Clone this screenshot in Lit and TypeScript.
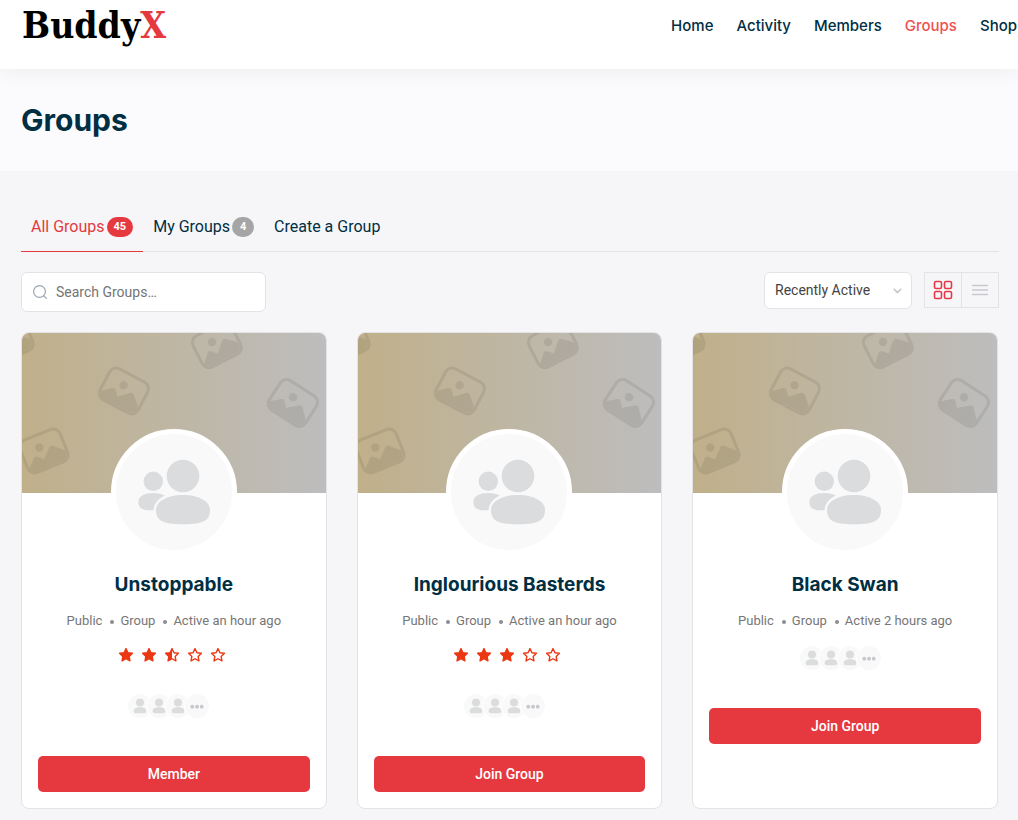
import { LitElement, html, css, svg, nothing } from "lit";
import { customElement, property } from "lit/decorators.js";

type Group = {
  name: string;
  active: string;
  rating: number | null;
  action: string;
};

const groups: Group[] = [
  { name: "Unstoppable", active: "Active an hour ago", rating: 2.5, action: "Member" },
  { name: "Inglourious Basterds", active: "Active an hour ago", rating: 3, action: "Join Group" },
  { name: "Black Swan", active: "Active 2 hours ago", rating: null, action: "Join Group" },
];

const navItems = ["Home", "Activity", "Members", "Groups", "Shop"];

const picture = (x: number, y: number, angle: number) => svg`
  <g transform="translate(${x} ${y}) rotate(${angle})">
    <rect x="-21.5" y="-17.5" width="43" height="35" rx="7.5" fill="none" stroke="currentColor" stroke-width="3"></rect>
    <circle cx="-3" cy="-5" r="4.2" fill="currentColor"></circle>
    <path d="M-20 11 L-12 3 Q-10 1 -8 3 L-3 8 L6 -1 Q8.500 -3.500 11 -1 L20 7.500 V9.500 Q20 16 13.500 16 H-13.500 Q-20 16 -20 11Z" fill="currentColor"></path>
  </g>`;

const starOutline =
  "M8 1.600 L9.950 5.700 L14.400 6.300 L11.150 9.400 L11.950 13.900 L8 11.750 L4.050 13.900 L4.850 9.400 L1.600 6.300 L6.050 5.700Z";

@customElement("star-rating")
class StarRating extends LitElement {
  @property({ type: Number }) value = 0;

  static styles = css`
    :host { display: flex; justify-content: center; gap: 7px; padding-right: 4px; color: #eb3812; }
    svg { display: block; width: 16px; height: 16px; }
  `;

  render() {
    return [0, 1, 2, 3, 4].map((i) => {
      const part = this.value - i;
      return html`<svg viewBox="0 0 16 16" aria-hidden="true">
        <path d=${starOutline} fill=${part >= 1 ? "currentColor" : "none"} stroke="currentColor" stroke-width="1.4" stroke-linejoin="round"></path>
        ${part > 0 && part < 1
          ? svg`<path d="M8 1.600 V11.750 L4.050 13.900 L4.850 9.400 L1.600 6.300 L6.050 5.700Z" fill="currentColor"></path>`
          : nothing}
      </svg>`;
    });
  }
}

@customElement("group-card")
class GroupCard extends LitElement {
  @property({ attribute: false }) group!: Group;

  static styles = css`
    :host {
      display: block;
      box-sizing: border-box;
      background: #fff;
      border: 1px solid #e3e3e5;
      border-radius: 8px;
      overflow: hidden;
      text-align: center;
    }
    .cover {
      display: block;
      width: 100%;
      height: 160px;
      background: linear-gradient(90deg, #c0b08a, #bdbdbe);
      color: #000;
    }
    .avatar {
      position: relative;
      display: block;
      width: 116px;
      height: 116px;
      margin: -64px auto 0;
      border: 5px solid #fff;
      border-radius: 50%;
      background: #f9f9f9;
    }
    .body { padding: 17px 16px 16px; }
    .name {
      margin: 0;
      font: 700 19px/26px Inter, sans-serif;
      color: #002e43;
    }
    .name a { color: inherit; text-decoration: none; }
    .meta {
      display: flex;
      justify-content: center;
      align-items: center;
      margin: 13px 0 0;
      font-size: 13px;
      line-height: 20px;
      color: #767676;
    }
    .dot {
      width: 4px;
      height: 4px;
      margin: 2px 6px 0 8px;
      border-radius: 50%;
      background: #8c8c91;
    }
    star-rating { margin: 16px 0 14px; }
    .people {
      display: flex;
      justify-content: center;
      margin-top: 15px;
      padding-right: 10px;
    }
    .rated .people { margin-top: 31px; }
    .person {
      width: 24px;
      height: 24px;
      border-radius: 50%;
      background: #f9f9f9;
      box-shadow: 0 0 0 1px #fff;
    }
    .person + .person { margin-left: -5px; }
    .action {
      display: block;
      width: 100%;
      height: 36px;
      margin-top: 38px;
      padding: 0;
      border: 0;
      border-radius: 5px;
      background: #e5393f;
      color: #fff;
      font: 500 14px/20px Roboto, sans-serif;
    }
  `;

  render() {
    const g = this.group;
    return html`
      <svg class="cover" viewBox="0 0 304 160" preserveAspectRatio="xMidYMid slice" aria-hidden="true">
        <g opacity="0.08">
          ${picture(-13, 7, -22)} ${picture(102, 58, 28)} ${picture(195, 12, -27)}
          ${picture(271, 70, 33)} ${picture(22, 118, -22)}
        </g>
      </svg>
      <svg class="avatar" viewBox="0 0 116 116" aria-hidden="true">
        <g fill="#dbdcde">
          <circle cx="37.300" cy="47.300" r="9.700"></circle>
          <path d="M22.300 68 C22.300 62 29 59 37 59 C42 59 46 60 49 61.800 C42 64.500 38 69.500 37.500 76.300 H33 C26 76.300 22.300 73.500 22.300 68Z"></path>
          <circle cx="67" cy="42" r="16.300"></circle>
          <path d="M40 76 C40 67 52 61 67 61 C82 61 94 67 94 76 C94 86 88 90.300 67 90.300 C46 90.300 40 86 40 76Z"></path>
        </g>
      </svg>
      <div class="body ${g.rating === null ? "" : "rated"}">
        <h2 class="name"><a href="#">${g.name}</a></h2>
        <p class="meta">
          <span>Public</span><span class="dot"></span><span>Group</span><span class="dot"></span><span>${g.active}</span>
        </p>
        ${g.rating === null ? nothing : html`<star-rating .value=${g.rating}></star-rating>`}
        <div class="people">
          ${[0, 1, 2].map(
            () => html`<svg class="person" viewBox="0 0 24 24" aria-hidden="true">
              <g fill="#dbdcde">
                <circle cx="12" cy="8.500" r="4"></circle>
                <path d="M5.700 17 C5.700 14.500 8 13.300 12 13.300 C16 13.300 18.300 14.500 18.300 17 C18.300 18.700 17.500 19.200 16 19.200 H8 C6.500 19.200 5.700 18.700 5.700 17Z"></path>
              </g>
            </svg>`
          )}
          <svg class="person" viewBox="0 0 24 24" aria-hidden="true">
            <g fill="#c6c7cb">
              <circle cx="7.300" cy="12.700" r="1.900"></circle>
              <circle cx="12" cy="12.700" r="1.900"></circle>
              <circle cx="16.700" cy="12.700" r="1.900"></circle>
            </g>
          </svg>
        </div>
        <button class="action" type="button">${g.action}</button>
      </div>
    `;
  }
}

@customElement("app-root")
class AppRoot extends LitElement {
  static styles = css`
    :host {
      display: block;
      min-height: 100vh;
      background: #f6f6f9;
      color: #002e43;
      font-family: Roboto, sans-serif;
    }
    * { box-sizing: border-box; }
    a { color: inherit; text-decoration: none; }
    .header {
      position: relative;
      display: flex;
      justify-content: space-between;
      align-items: flex-start;
      height: 69px;
      padding: 0 1px 0 22px;
      background: #fff;
      box-shadow: 0 0 24px rgba(0, 0, 0, 0.07);
    }
    .logo {
      padding-top: 2px;
      font: 700 37px/46px "DejaVu Serif Condensed", "DejaVu Serif", serif;
      color: #000;
    }
    .logo span { color: #e5393f; }
    .nav { display: flex; gap: 23px; padding-top: 14px; font: 500 15px/24px Inter, sans-serif; }
    .nav .current { color: #ef5050; }
    .banner { padding: 32px 21px 31px; background: #fbfbfe; }
    .title { margin: 0; font: 700 30px/39px Inter, sans-serif; }
    .main { padding: 36px 19px 11px 21px; }
    .tabs { display: flex; border-bottom: 1px solid #e3e3e5; font-size: 16px; line-height: 20px; }
    .tab {
      display: flex;
      gap: 2px;
      height: 45px;
      margin-bottom: -1px;
      padding: 10px 10px 0;
      border-bottom: 1px solid transparent;
    }
    .tab.current { color: #e5393f; border-color: #e5393f; }
    .count {
      min-width: 22px;
      height: 20px;
      padding: 0 7px;
      border-radius: 10px;
      background: #a5a5a5;
      color: #fff;
      font-size: 11px;
      font-weight: 700;
      text-align: center;
    }
    .current .count { background: #e5393f; }
    .tools { display: flex; align-items: flex-start; gap: 12px; margin: 20px 0; }
    .search {
      display: flex;
      align-items: center;
      gap: 8px;
      width: 245px;
      height: 40px;
      margin-right: auto;
      padding: 0 10px;
      border: 1px solid #e3e3e5;
      border-radius: 6px;
      background: #fff;
      color: #9ba5b0;
    }
    .search svg { flex: none; }
    .search input {
      width: 100%;
      padding: 0;
      border: 0;
      outline: 0;
      background: none;
      font: 14px/20px Roboto, sans-serif;
      color: #444;
    }
    .search input::placeholder { color: #757575; opacity: 1; }
    .order { display: grid; align-items: center; width: 148px; height: 37px; }
    .order > * { grid-area: 1 / 1; }
    .order select {
      appearance: none;
      width: 100%;
      height: 37px;
      padding: 0 30px 2px 10px;
      border: 1px solid #e3e3e5;
      border-radius: 6px;
      background: #fff;
      font: 14px/20px Roboto, sans-serif;
      color: #444;
    }
    .order svg { justify-self: end; margin-right: 10px; pointer-events: none; }
    .views { display: flex; border: 1px solid #e3e3e5; }
    .view {
      display: flex;
      align-items: center;
      justify-content: center;
      width: 36px;
      height: 34px;
      padding: 0;
      border: 0;
      background: none;
      color: #c9cacd;
    }
    .view + .view { width: 37px; border-left: 1px solid #e3e3e5; }
    .view.on { color: #e5394a; }
    .cards { display: grid; grid-template-columns: repeat(3, minmax(0, 1fr)); gap: 30px; padding-right: 1px; }
  `;

  render() {
    return html`
      <header class="header">
        <a class="logo" href="#">Buddy<span>X</span></a>
        <nav class="nav">
          ${navItems.map((n) => html`<a href="#" class=${n === "Groups" ? "current" : ""}>${n}</a>`)}
        </nav>
      </header>
      <div class="banner"><h1 class="title">Groups</h1></div>
      <main class="main">
        <nav class="tabs">
          <a class="tab current" href="#">All Groups<span class="count">45</span></a>
          <a class="tab" href="#">My Groups<span class="count">4</span></a>
          <a class="tab" href="#">Create a Group</a>
        </nav>
        <div class="tools">
          <label class="search">
            <svg width="16" height="16" viewBox="0 0 16 16" fill="none" stroke="currentColor" stroke-width="1.200" stroke-linecap="round" aria-hidden="true">
              <circle cx="7.500" cy="7.500" r="5.900"></circle><path d="M11.800 11.800 L14.400 14.400"></path>
            </svg>
            <input type="search" placeholder="Search Groups…" aria-label="Search Groups" />
          </label>
          <div class="order">
            <select aria-label="Order by"><option>Recently Active</option></select>
            <svg width="9" height="6" viewBox="0 0 9 6" fill="none" stroke="#c3c6cb" stroke-width="1.600" stroke-linecap="round" aria-hidden="true"><path d="M1.200 1.200 L4.500 4.500 L7.800 1.200"></path></svg>
          </div>
          <div class="views">
            <button class="view on" type="button" aria-label="Grid view">
              <svg width="20" height="20" viewBox="0 0 20 20" fill="none" stroke="currentColor" stroke-width="1.600">
                <rect x="1.500" y="1.500" width="7" height="7" rx="1.500"></rect><rect x="11.500" y="1.500" width="7" height="7" rx="1.500"></rect>
                <rect x="1.500" y="11.500" width="7" height="7" rx="1.500"></rect><rect x="11.500" y="11.500" width="7" height="7" rx="1.500"></rect>
              </svg>
            </button>
            <button class="view" type="button" aria-label="List view">
              <svg width="18" height="12" viewBox="0 0 18 12" stroke="currentColor" stroke-width="1.400" stroke-linecap="round">
                <path d="M1.500 1.500 H16.500 M1.500 6 H16.500 M1.500 10.500 H16.500"></path>
              </svg>
            </button>
          </div>
        </div>
        <div class="cards">${groups.map((g) => html`<group-card .group=${g}></group-card>`)}</div>
      </main>
    `;
  }
}
